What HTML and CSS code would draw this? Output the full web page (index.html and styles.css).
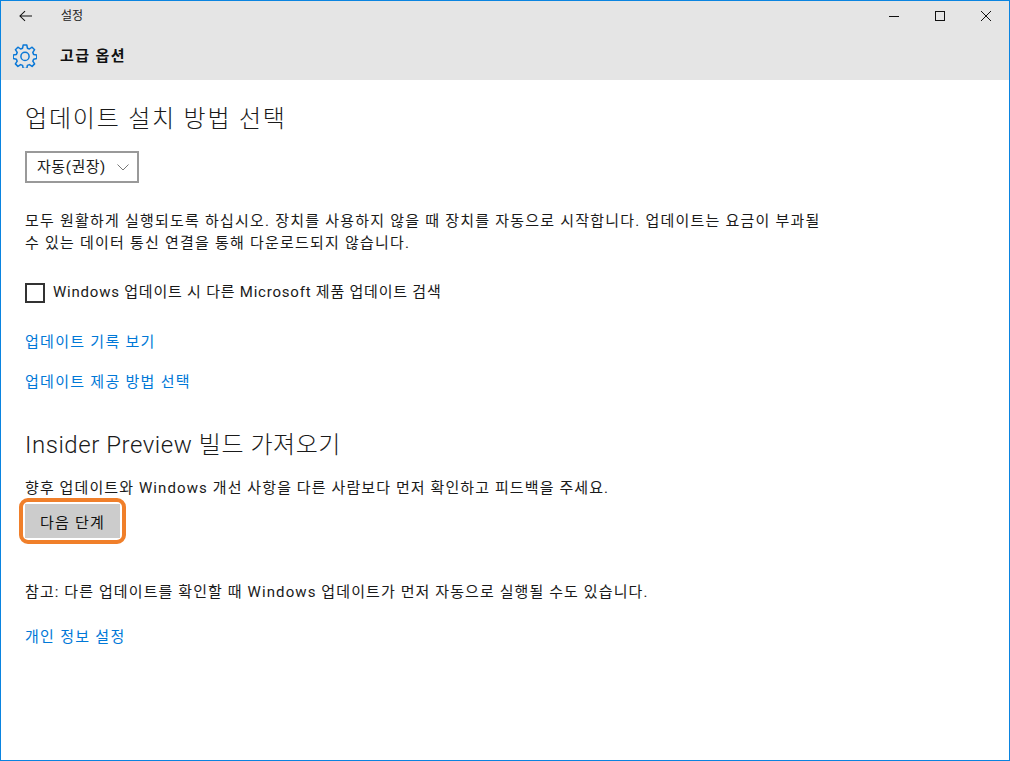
FILE: index.html
```html
<!DOCTYPE html>
<html lang="ko">
<head>
<meta charset="utf-8">
<title>설정</title>
<link rel="stylesheet" href="styles.css">
</head>
<body>
<div class="window">
  <header class="chrome">
    <div class="titlebar">
      <svg class="back" viewBox="0 0 14 12" width="13" height="12"><path d="M6.500.7 1 6l5.500 5.300M1 6h13" fill="none" stroke="#111" stroke-width="1.100"/></svg>
      <span class="apptitle">설정</span>
      <div class="controls">
        <svg viewBox="0 0 10 10" width="10" height="10"><path d="M0 5.500h10" stroke="#111" stroke-width="1"/></svg>
        <svg viewBox="0 0 10 10" width="10" height="10"><rect x=".5" y=".5" width="9" height="9" fill="none" stroke="#111" stroke-width="1"/></svg>
        <svg viewBox="0 0 10 10" width="10" height="10"><path d="M0 0l10 10M10 0 0 10" stroke="#111" stroke-width="1"/></svg>
      </div>
    </div>
    <div class="pagebar">
      <svg class="gear" viewBox="0 0 24 24" width="24" height="24"><path d="M10.200 1h3.600l.6 3.200 2 .8 2.700-1.800 2.500 2.500-1.800 2.700.8 2 3.200.6v3.600l-3.200.6-.8 2 1.800 2.700-2.500 2.500-2.700-1.800-2 .8-.6 3.200h-3.600l-.6-3.200-2-.8-2.700 1.800-2.500-2.500 1.800-2.700-.8-2-3.200-.6v-3.600l3.200-.6.8-2-1.800-2.700 2.500-2.500 2.700 1.800 2-.8z" fill="none" stroke="#0a78d7" stroke-width="1.500" stroke-linejoin="round"/><circle cx="12" cy="12.400" r="4.100" fill="none" stroke="#0a78d7" stroke-width="1.500"/></svg>
      <span class="pagetitle">고급 옵션</span>
    </div>
  </header>
  <main class="content">
    <h1 class="h-first">업데이트 설치 방법 선택</h1>
    <div class="select"><span>자동(권장)</span>
      <svg viewBox="0 0 12 7" width="12" height="7"><path d="M.5.5 6 6 11.500.5" fill="none" stroke="#777" stroke-width="1"/></svg>
    </div>
    <p class="desc">모두 원활하게 실행되도록 하십시오. 장치를 사용하지 않을 때 장치를 자동으로 시작합니다. 업데이트는 요금이 부과될<br>수 있는 데이터 통신 연결을 통해 다운로드되지 않습니다.</p>
    <label class="check"><span class="box"></span><span>Windows 업데이트 시 다른 Microsoft 제품 업데이트 검색</span></label>
    <a class="link l1">업데이트 기록 보기</a>
    <a class="link l2">업데이트 제공 방법 선택</a>
    <h2 class="h-second">Insider Preview 빌드 가져오기</h2>
    <p class="lead">향후 업데이트와 Windows 개선 사항을 다른 사람보다 먼저 확인하고 피드백을 주세요.</p>
    <div class="highlight"><button class="btn">다음 단계</button></div>
    <p class="note">참고: 다른 업데이트를 확인할 때 Windows 업데이트가 먼저 자동으로 실행될 수도 있습니다.</p>
    <a class="link l3">개인 정보 설정</a>
  </main>
</div>
</body>
</html>
```
FILE: styles.css
```css
* { box-sizing: border-box; }
html, body { margin: 0; height: 100%; }
body {
  font-family: Roboto, "Noto Sans CJK KR", sans-serif;
  color: #1a1a1a;
  background: #fff;
}
.window {
  width: 1010px;
  height: 761px;
  border: 1px solid #0a84e0;
  overflow: hidden;
  display: flex;
  flex-direction: column;
}
.chrome { background: #e5e5e5; height: 79px; flex: none; }
.titlebar { height: 30px; display: flex; align-items: center; padding: 0 0 0 18px; }
.back { flex: none; }
.apptitle { font-size: 12px; margin-left: 29px; color: #222; line-height: 1; }
.controls { margin-left: auto; display: flex; gap: 36px; padding-right: 18px; align-items: center; }
.pagebar { height: 48px; display: flex; align-items: center; padding: 0 0 0 12px; margin-top: 1px; }
.pagetitle { font-size: 15px; font-weight: 700; margin-left: 23px; color: #111; letter-spacing: 1.400px; line-height: 1; }
.content { padding: 0 24px; flex: 1; }
h1, h2 { font-weight: 300; font-size: 24px; line-height: 32px; margin: 0; color: #1a1a1a; }
.h-first { margin-top: 23px; letter-spacing: 1.800px; }
.h-second { margin-top: 37px; letter-spacing: .550px; }
.select {
  width: 114px; height: 32px; margin-top: 16px;
  border: 2px solid #999; display: flex; align-items: center; justify-content: space-between;
  padding: 0 8px 0 10px; font-size: 15px; line-height: 1; letter-spacing: .550px;
}
.desc, .lead, .note { margin: 0; font-size: 15px; line-height: 22px; letter-spacing: 1.100px; }
.desc { margin-top: 27px; letter-spacing: 1.220px; }
.check { display: flex; align-items: center; gap: 8px; height: 20px; margin-top: 28px; font-size: 15px; line-height: 20px; letter-spacing: .780px; }
.box { width: 20px; height: 20px; margin-top: 2px; border: 2px solid #333; flex: none; }
.link { display: block; color: #0078d7; font-size: 15px; line-height: 20px; letter-spacing: 1.280px; }
.l1 { margin-top: 30px; }
.l2 { margin-top: 20px; }
.lead { margin-top: 16px; }
.highlight {
  width: 107px; height: 46px; margin: -1px 0 0 -6px;
  border: 4px solid #f07f2a; border-radius: 9px;
  padding: 2px; background: #fff;
}
.btn {
  display: block; width: 100%; height: 100%; border: 0; background: #ccc;
  font: inherit; font-size: 15px; color: #111; padding: 0; letter-spacing: 1.200px;
}
.note { margin-top: 37px; }
.l3 { margin-top: 24px; }
```
